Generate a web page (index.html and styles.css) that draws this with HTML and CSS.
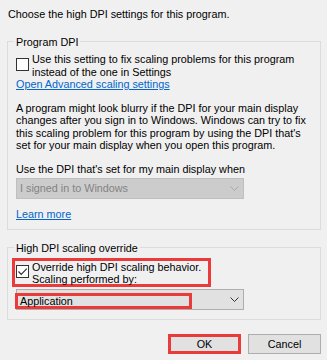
FILE: index.html
```html
<!DOCTYPE html><html>
<head>
  <meta name="viewport" content="width=device-width, initial-scale=1.0">
  <title>High DPI settings</title>
  <link rel="stylesheet" href="styles.css">
</head><body>

<p class="intro">Choose the high DPI settings for this program.</p>

<fieldset class="group">
  <legend>Program DPI</legend>
  <div class="check">
    <span class="box"></span>
    <span class="check-text">Use this setting to fix scaling problems for this program instead of the one in Settings</span>
  </div>
  <a class="link" href="#">Open Advanced scaling settings</a>
  <p class="note">A program might look blurry if the DPI for your main display changes after you sign in to Windows. Windows can try to fix this scaling problem for this program by using the DPI that's set for your main display when you open this program.</p>
  <p class="caption">Use the DPI that's set for my main display when</p>
  <div class="combo combo-off">
    <span class="combo-text">I signed in to Windows</span>
    <svg class="chevron" width="9" height="5" viewBox="0 0 9 5"><path d="M0.5 0.5 L4.5 4.5 L8.5 0.5" fill="none" stroke="#a8a8a8" stroke-width="1"/></svg>
  </div>
  <a class="link learn" href="#">Learn more</a>
</fieldset>

<fieldset class="group group-override">
  <legend>High DPI scaling override</legend>
  <div class="check marked">
    <span class="box">
      <svg width="11" height="11" viewBox="0 0 11 11"><path d="M1.5 5.5 L4.2 8.3 L9.8 2.6" fill="none" stroke="#333" stroke-width="1.2"/></svg>
    </span>
    <span class="check-text">Override high DPI scaling behavior. Scaling performed by:</span>
  </div>
  <div class="combo">
    <span class="combo-text marked">Application</span>
    <svg class="chevron" width="9" height="5" viewBox="0 0 9 5"><path d="M0.5 0.5 L4.5 4.5 L8.5 0.5" fill="none" stroke="#333" stroke-width="1"/></svg>
  </div>
</fieldset>

<div class="actions">
  <button class="btn marked">OK</button>
  <button class="btn">Cancel</button>
</div>

</body></html>
```

FILE: styles.css
```css
* { box-sizing: border-box; }
body {
  margin: 0;
  padding: 8px 6px 0 7px;
  background: #f0f0f0;
  font-family: "Liberation Sans", Arial, sans-serif;
  font-size: 10.8px;
  line-height: 12.5px;
  color: #000;
}
p { margin: 0; }
.intro { margin: 0 0 15px 1px; }

.group { margin: 0; padding: 5px 8px 8px 8px; border: 1px solid #dcdcdc; min-width: 0; }
.group legend { padding: 0 2px; margin-left: -2px; }
.group-override { margin-top: 12px; padding-top: 5px; padding-bottom: 9px; }

.check { display: flex; gap: 3px; }
.box { flex: none; width: 13px; height: 13px; margin-top: 5px; border: 1px solid #333; background: #fff; }
.box svg { display: block; }
.check.marked { width: 199px; height: 29px; margin: -1px 0 0 -4px; padding-left: 1px; border: 3px solid #ea3a3a; line-height: 12px; }
.check.marked .box { margin-top: 4px; }

.link { display: block; color: #0066cc; text-decoration: underline; }
.note { margin-top: 11px; }
.caption { margin-top: 11px; }
.learn { margin-top: 9px; width: max-content; }

.combo { display: flex; align-items: center; width: 228px; height: 21px; margin-top: 3px; padding: 0 4px 0 3px; border: 1px solid #adadad; background: #e1e1e1; }
.combo-off { background: #cccccc; border-color: #bfbfbf; color: #838383; }
.chevron { margin-left: auto; display: block; }
.group-override .combo { margin-top: 2px; padding: 3px 4px 0 0; align-items: flex-start; }
.group-override .chevron { align-self: center; margin-top: -3px; }
.combo-text.marked { width: 177px; height: 16px; margin-left: -2px; padding-left: 2px; border: 3px solid #ea3a3a; line-height: 10px; }

.actions { display: flex; justify-content: flex-end; gap: 7px; margin-top: 14px; }
.btn { width: 73px; height: 20px; padding: 0; border: 1px solid #adadad; background: #e1e1e1; font: inherit; color: #000; }
.btn.marked { border: 3px solid #ea3a3a; }
```
